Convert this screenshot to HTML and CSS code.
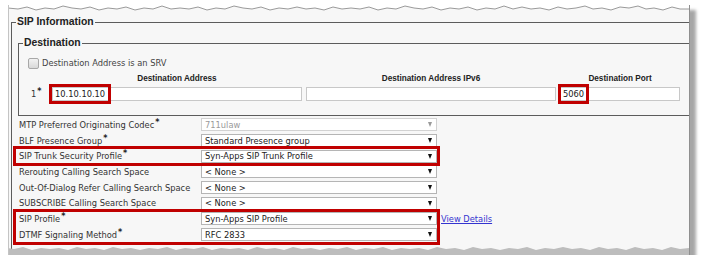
FILE: index.html
```html
<!DOCTYPE html>
<html lang="en">
<head>
  <meta charset="UTF-8">
  <title>SIP Trunk Configuration</title>
<link rel="stylesheet" href="styles.css">
</head>
<body>
  <div class="shot">
    <div class="page">

      <fieldset class="sip">
        <legend>SIP Information</legend>

        <!-- Destination block -->
        <fieldset class="dest">
          <legend>Destination</legend>
          <div class="srv"><span class="check"></span>Destination Address is an SRV</div>
          <div class="dest-grid">
            <span></span>
            <b class="head">Destination Address</b>
            <b class="head">Destination Address IPv6</b>
            <b class="head">Destination Port</b>
            <span class="num">1<sup>*</sup></span>
            <span class="field hl-ip">10.10.10.10</span>
            <span class="field"></span>
            <span class="field hl-port">5060</span>
          </div>
        </fieldset>

        <div class="rows">
          <div class="row">
            <span class="label">MTP Preferred Originating Codec<sup>*</sup></span>
            <span class="select off">711ulaw<i></i></span>
          </div>
          <div class="row">
            <span class="label">BLF Presence Group<sup>*</sup></span>
            <span class="select">Standard Presence group<i></i></span>
          </div>
          <div class="row mark">
            <span class="label">SIP Trunk Security Profile<sup>*</sup></span>
            <span class="select">Syn-Apps SIP Trunk Profile<i></i></span>
          </div>
          <div class="row">
            <span class="label">Rerouting Calling Search Space</span>
            <span class="select">&lt; None &gt;<i></i></span>
          </div>
          <div class="row">
            <span class="label">Out-Of-Dialog Refer Calling Search Space</span>
            <span class="select">&lt; None &gt;<i></i></span>
          </div>
          <div class="row">
            <span class="label">SUBSCRIBE Calling Search Space</span>
            <span class="select">&lt; None &gt;<i></i></span>
          </div>
          <div class="mark">
            <div class="row">
              <span class="label">SIP Profile<sup>*</sup></span>
              <span class="select">Syn-Apps SIP Profile<i></i></span>
              <a href="#" class="details">View Details</a>
            </div>
            <div class="row">
              <span class="label">DTMF Signaling Method<sup>*</sup></span>
              <span class="select">RFC 2833<i></i></span>
            </div>
          </div>
        </div>
      </fieldset>

      <!-- torn paper edges of the screenshot -->
      <svg class="tear-top" width="682" height="10" viewBox="0 0 682 10">
        <path d="M0 0 H682 V5 L672 5 L664 3 L655 6 L646 4 L638 5 L630 2 L621 4 L612 3 L603 6 L594 4 L585 5 L577 2 L568 4 L559 5 L550 3 L541 6 L532 4 L523 5 L514 3 L505 5 L496 2 L487 5 L478 4 L469 6 L460 3 L451 5 L442 4 L433 6 L424 3 L415 5 L406 4 L397 2 L388 5 L379 4 L370 6 L361 3 L352 5 L343 4 L334 5 L325 3 L316 6 L307 4 L298 5 L289 3 L280 5 L271 4 L262 6 L253 3 L244 5 L235 4 L226 2 L217 5 L208 4 L199 6 L190 3 L181 5 L172 4 L163 5 L154 2 L145 5 L136 4 L127 6 L118 3 L109 5 L100 4 L91 6 L82 3 L73 5 L64 4 L55 2 L46 5 L37 4 L28 6 L19 3 L10 5 L0 4 Z" fill="#fff" stroke="#9a9a9a" stroke-width="1"/>
      </svg>
      <svg class="tear-bottom" width="682" height="10" viewBox="0 0 682 10">
        <path d="M0 10 H682 V3 L672 4 L663 2 L654 5 L645 3 L636 4 L627 2 L618 5 L609 3 L600 4 L591 2 L582 5 L573 3 L564 4 L555 2 L546 4 L537 3 L528 5 L519 2 L510 4 L501 3 L492 5 L483 3 L474 4 L465 2 L456 5 L447 3 L438 4 L429 2 L420 5 L411 3 L402 4 L393 3 L384 5 L375 2 L366 4 L357 3 L348 5 L339 2 L330 4 L321 3 L312 5 L303 3 L294 4 L285 2 L276 5 L267 3 L258 4 L249 2 L240 5 L231 3 L222 4 L213 3 L204 5 L195 2 L186 4 L177 3 L168 5 L159 2 L150 4 L141 3 L132 5 L123 3 L114 4 L105 2 L96 5 L87 3 L78 4 L69 2 L60 5 L51 3 L42 4 L33 3 L24 5 L15 2 L6 4 L0 3 Z" fill="#bdbdbd"/>
      </svg>
    </div>
  </div>
</body>
</html>
```

FILE: styles.css
```css
body {
  margin: 0;
  background: #fff;
  font-family: "DejaVu Sans", Verdana, sans-serif;
  font-size: 8.3px;
  color: #333;
}

.shot {
  padding: 5px 0 0 8px;
}

.page {
  position: relative;
  width: 680px;
  height: 250px;
  background: #f7f7f7;
  border-left: 1px solid #c4c4c4;
  border-right: 1px solid #8f8f8f;
  overflow: hidden;
  box-shadow: 6px 5px 3px rgba(0,0,0,0.35);
}

fieldset {
  border: 1px solid #5c5c5c;
  margin: 0;
  padding: 0;
  min-width: 0;
}

legend {
  font: bold 10.4px/12px "Liberation Sans", Arial, sans-serif;
  color: #222;
  padding: 0 1px;
  margin-left: 4px;
}

.sip {
  margin: 11px 0 0 2px;
  width: 900px;
  padding-bottom: 40px;
}

.dest {
  margin: 9px 0 0 6px;
  padding-bottom: 14px;
}

.srv {
  display: flex;
  align-items: center;
  margin: 8px 0 0 9px;
  line-height: 12px;
  color: #444;
}

.check {
  width: 9px;
  height: 9px;
  margin-right: 3px;
  border: 1px solid #a8a8a8;
  border-radius: 2px;
  background: linear-gradient(#f2f2f2, #d8d8d8);
}

.dest-grid {
  display: grid;
  grid-template-columns: 29px 250px 250px 120px;
  column-gap: 4px;
  row-gap: 2px;
  align-items: center;
  margin-top: 4px;
}

.head {
  font: bold 8.2px/12px "Liberation Sans", Arial, sans-serif;
  color: #222;
  text-align: center;
}

.num {
  padding-left: 12px;
  color: #333;
}

.field {
  position: relative;
  height: 14px;
  box-sizing: border-box;
  border: 1px solid #c8c8c8;
  background: #fff;
  padding-left: 2px;
  line-height: 12px;
  color: #222;
}

/* red annotation boxes */
.hl-ip::after,
.hl-port::after,
.mark::after {
  content: "";
  position: absolute;
  box-sizing: border-box;
  border: 3px solid #c00000;
}

.hl-ip::after {
  left: -4px;
  top: -4px;
  width: 62px;
  height: 20px;
}

.hl-port::after {
  left: -3px;
  top: -4px;
  width: 31px;
  height: 20px;
}

.rows {
  margin: 1px 0 0 7px;
}

.row {
  display: flex;
  align-items: center;
  height: 15.7px;
}

.mark {
  position: relative;
}

.mark::after {
  left: -6px;
  top: -2px;
  bottom: -2px;
  width: 427px;
}

.label {
  width: 182px;
  flex: none;
  color: #333;
  white-space: nowrap;
}

sup {
  font-size: 8px;
  font-weight: bold;
  vertical-align: top;
  line-height: 6px;
  margin-left: 1px;
  color: #222;
}

.select {
  box-sizing: border-box;
  width: 236px;
  height: 13px;
  flex: none;
  display: flex;
  align-items: center;
  justify-content: space-between;
  padding: 0 4px 0 3px;
  border: 1px solid #b5b5b5;
  background: #fff;
  color: #222;
}

.select i {
  border-left: 2.5px solid transparent;
  border-right: 2.5px solid transparent;
  border-top: 5px solid #111;
}

.select.off {
  border-color: #d2d2d2;
  color: #9a9a9a;
}

.select.off i {
  border-top-color: #9a9a9a;
}

.details {
  margin-left: 4px;
  color: #3434d0;
}

.tear-top,
.tear-bottom {
  position: absolute;
  left: -1px;
}

.tear-top {
  top: -1px;
}

.tear-bottom {
  bottom: 0;
}
```
